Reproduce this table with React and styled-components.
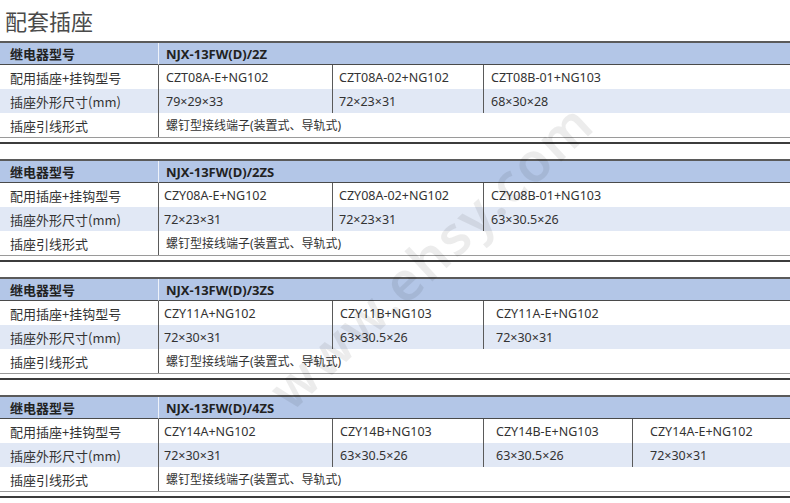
import React from "react";
import styled, { createGlobalStyle } from "styled-components";

const Global = createGlobalStyle`
  html, body { margin: 0; padding: 0; background: #fff; }
  body { font-family: "Noto Sans", "Noto Sans CJK SC", sans-serif; color: #333; }
`;

const Page = styled.div`
  position: relative;
  width: 790px;
  height: 503px;
  overflow: hidden;
  background: #fff;
`;

const Title = styled.h1`
  margin: 0;
  height: 41px;
  padding-left: 5px;
  font-family: "Noto Sans CJK SC", sans-serif;
  font-size: 22px;
  font-weight: 400;
  line-height: 40px;
  color: #4a4a4a;
`;

const Block = styled.section`
  margin-bottom: 15px;
`;

const Grid = styled.div`
  display: grid;
  grid-template-columns: 158px 174px 151px 149px 1fr;
  border-top: 2px solid #5a5a5a;
  border-bottom: 1px solid #9a9a9a;
`;

const Cell = styled.div`
  grid-column: ${(p) => p.$span || "auto"};
  height: ${(p) => (p.$head ? "22px" : "24px")};
  display: flex;
  align-items: center;
  padding-left: ${(p) => p.$pad ?? 7}px;
  box-sizing: border-box;
  font-size: ${(p) => (p.$head ? "13px" : p.$small ? "12px" : "12.5px")};
  white-space: nowrap;
  font-weight: ${(p) => (p.$head ? 700 : 400)};
  color: ${(p) => (p.$head ? "#222" : "#333")};
  background: ${(p) => (p.$head ? "#b3c6e7" : p.$alt ? "#e1e8f5" : "#fff")};
  border-bottom: ${(p) => (p.$head ? "1px solid #4a4a4a" : "none")};
  border-left: ${(p) =>
    p.$divider ? (p.$head ? "1px solid #eef2fa" : "1px solid #5a5a5a") : "none"};
`;

const LabelCell = styled(Cell)`
  padding-left: 10px;
  font-size: 13px;
  font-family: "Noto Sans CJK SC", sans-serif;
`;

const Rule = styled.div`
  margin-top: 4px;
  height: 2px;
  background: #3c3c3c;
`;

const Watermark = styled.div`
  position: absolute;
  left: 430px;
  top: 255px;
  transform: translate(-50%, -50%) rotate(-43deg);
  font-family: "Noto Sans", sans-serif;
  font-size: 54px;
  font-weight: 600;
  letter-spacing: 2px;
  color: rgba(0, 0, 0, 0.075);
  pointer-events: none;
  white-space: nowrap;
`;

const tables = [
  {
    model: "NJX-13FW(D)/2Z",
    sockets: ["CZT08A-E+NG102", "CZT08A-02+NG102", "CZT08B-01+NG103"],
    sizes: ["79×29×33", "72×23×31", "68×30×28"],
    pads: [7, 6, 7],
  },
  {
    model: "NJX-13FW(D)/2ZS",
    sockets: ["CZY08A-E+NG102", "CZY08A-02+NG102", "CZY08B-01+NG103"],
    sizes: ["72×23×31", "72×23×31", "63×30.5×26"],
    pads: [5, 6, 7],
  },
  {
    model: "NJX-13FW(D)/3ZS",
    sockets: ["CZY11A+NG102", "CZY11B+NG103", "CZY11A-E+NG102"],
    sizes: ["72×30×31", "63×30.5×26", "72×30×31"],
    pads: [5, 7, 12],
  },
  {
    model: "NJX-13FW(D)/4ZS",
    sockets: ["CZY14A+NG102", "CZY14B+NG103", "CZY14B-E+NG103", "CZY14A-E+NG102"],
    sizes: ["72×30×31", "63×30.5×26", "63×30.5×26", "72×30×31"],
    pads: [5, 7, 12, 17],
  },
];

function spanFor(i, n) {
  if (n === 3 && i === 2) return "4 / 6";
  return "auto";
}

function ValueRow({ label, values, pads, alt }) {
  return (
    <>
      <LabelCell $alt={alt}>{label}</LabelCell>
      {values.map((v, i) => (
        <Cell key={i} $alt={alt} $divider $pad={pads[i]} $span={spanFor(i, values.length)}>
          {v}
        </Cell>
      ))}
    </>
  );
}

function SocketTable({ data }) {
  return (
    <Block>
      <Grid>
        <LabelCell $head>继电器型号</LabelCell>
        <Cell $head $divider $span="2 / 6">{data.model}</Cell>
        <ValueRow label="配用插座+挂钩型号" values={data.sockets} pads={data.pads} />
        <ValueRow label="插座外形尺寸(mm)" values={data.sizes} pads={data.pads} alt />
        <LabelCell>插座引线形式</LabelCell>
        <Cell $divider $small $span="2 / 6">螺钉型接线端子(装置式、导轨式)</Cell>
      </Grid>
      <Rule />
    </Block>
  );
}

export default function App() {
  return (
    <Page>
      <Global />
      <Title>配套插座</Title>
      {tables.map((t) => (
        <SocketTable key={t.model} data={t} />
      ))}
      <Watermark>www.ehsy.com</Watermark>
    </Page>
  );
}
